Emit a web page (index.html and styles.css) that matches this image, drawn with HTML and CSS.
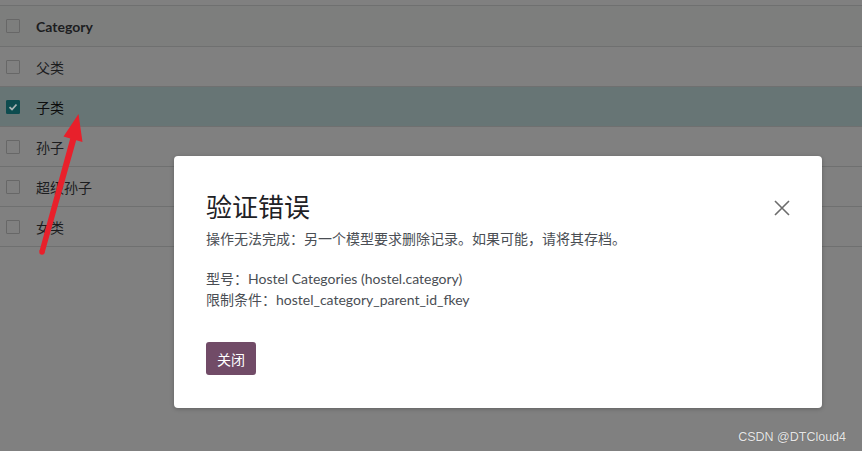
FILE: index.html
```html
<!DOCTYPE html>
<html lang="zh-CN">
<head>
  <meta charset="UTF-8" />
  <title>Hostel Categories</title>
  <link rel="stylesheet" href="styles.css">
</head>
<body>

  <div class="list">
    <div class="row head">
      <span class="check"></span>
      <span class="cell">Category</span>
    </div>
    <div class="row">
      <span class="check"></span>
      <span class="cell">父类</span>
    </div>
    <div class="row selected">
      <span class="check checked">
        <svg width="10" height="8" viewBox="0 0 10 8"><path d="M1.5 4.2 L4 6.5 L8.5 1.5" fill="none" stroke="#a9b4b4" stroke-width="1.8"/></svg>
      </span>
      <span class="cell">子类</span>
    </div>
    <div class="row">
      <span class="check"></span>
      <span class="cell">孙子</span>
    </div>
    <div class="row">
      <span class="check"></span>
      <span class="cell">超级孙子</span>
    </div>
    <div class="row">
      <span class="check"></span>
      <span class="cell">女类</span>
    </div>
  </div>

  <div class="modal">
    <div class="modal-head">
      <h2>验证错误</h2>
      <button class="close" aria-label="Close">
        <svg width="16" height="16" viewBox="0 0 16 16"><path d="M1 1 L15 15 M15 1 L1 15" stroke="#6c6c6c" stroke-width="1.6"/></svg>
      </button>
    </div>
    <p class="lead">操作无法完成：另一个模型要求删除记录。如果可能，请将其存档。</p>
    <p class="info">型号：Hostel Categories (hostel.category)<br>限制条件：hostel_category_parent_id_fkey</p>
    <button class="btn-close">关闭</button>
  </div>

  <svg class="arrow" width="862" height="451" viewBox="0 0 862 451">
    <polygon fill="#e8202b" points="78.5,114 82.5,142 76.2,140.2 44.6,252.8 39.4,251.3 70.2,138.6 63.5,136.5"/>
    <circle cx="42" cy="252" r="2.7" fill="#e8202b"/>
  </svg>

  <div class="watermark">CSDN @DTCloud4</div>

</body>
</html>
```

FILE: styles.css
```css
body {
  margin: 0;
  height: 451px;
  position: relative;
  overflow: hidden;
  background: #808080;
  font-family: Lato, 'Noto Sans CJK SC', sans-serif;
  color: #1c1d1f;
}

.list {
  padding-top: 5px;
}

.row {
  display: flex;
  align-items: center;
  height: 39px;
  border-bottom: 1px solid #6f7070;
  font-size: 14px;
}

.row.head {
  height: 40px;
  border-top: 1px solid #6f7070;
  background: #7d7e7d;
  font-weight: 700;
}

.row.selected {
  background: #677575;
  color: #0c0d0d;
}

.check {
  width: 12px;
  height: 12px;
  margin-left: 6px;
  border: 1px solid #676767;
  border-radius: 1px;
  display: flex;
  align-items: center;
  justify-content: center;
}

.check.checked {
  background: #0d4c4f;
  border-color: #0d4c4f;
}

.cell {
  margin-left: 16px;
}

.modal {
  position: absolute;
  left: 174px;
  top: 156px;
  width: 584px;
  height: 189px;
  padding: 36px 32px 27px;
  background: #ffffff;
  border-radius: 4px;
  box-shadow: 0 1px 4px rgba(0,0,0,0.25);
  color: #4a4e54;
}

.modal-head {
  display: flex;
  justify-content: space-between;
  align-items: center;
}

.modal-head h2 {
  margin: 0;
  font-size: 26px;
  font-weight: 400;
  line-height: 31px;
  color: #1e2125;
}

.close {
  background: none;
  border: none;
  padding: 0;
  width: 16px;
  height: 16px;
  cursor: pointer;
}

.lead {
  margin: 5px 0 0;
  font-size: 14px;
  line-height: 21px;
}

.info {
  margin: 19px 0 0;
  font-size: 14px;
  line-height: 21px;
}

.btn-close {
  margin-top: 32px;
  width: 50px;
  height: 33px;
  background: #714b67;
  color: #ffffff;
  border: none;
  border-radius: 3px;
  font-family: inherit;
  font-size: 14px;
  cursor: pointer;
}

.arrow {
  position: absolute;
  left: 0;
  top: 0;
  pointer-events: none;
}

.watermark {
  position: absolute;
  right: 16px;
  bottom: 7px;
  font-family: 'Liberation Sans', sans-serif;
  font-size: 12.5px;
  color: #e6e6e6;
  text-shadow: 0 0 1px rgba(0,0,0,0.3);
}
```
